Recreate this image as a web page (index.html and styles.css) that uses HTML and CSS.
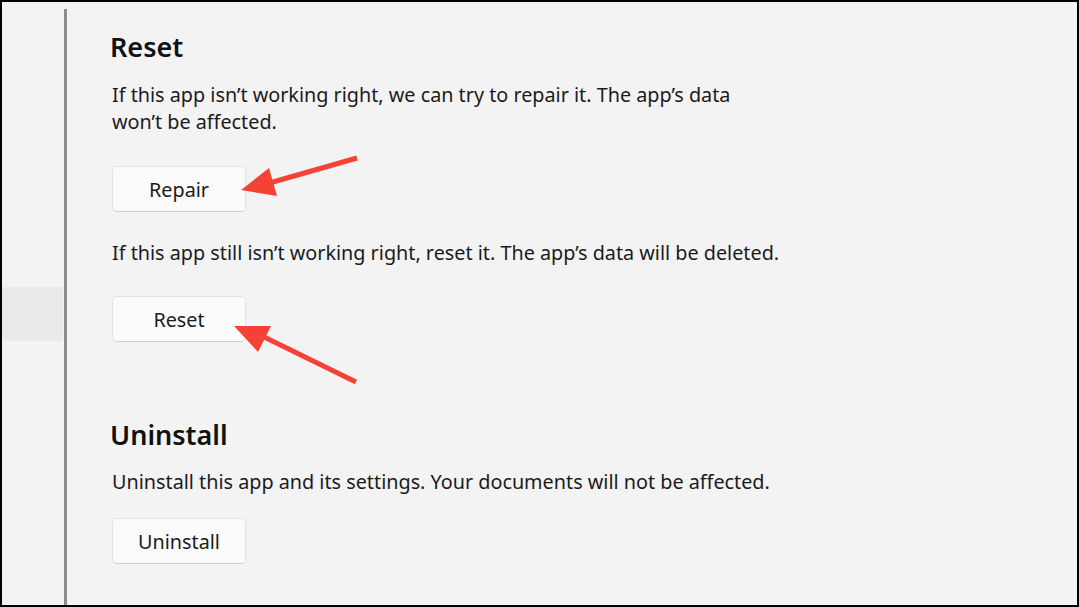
FILE: index.html
```html
<!DOCTYPE html>
<html>
<head>
<meta charset="utf-8">
<link rel="stylesheet" href="styles.css">
</head>
<body>
<div class="frame">
  <aside class="sidebar">
    <div class="nav-item"></div>
  </aside>
  <div class="divider"></div>
  <main class="content">
    <section class="group">
      <h2 class="title">Reset</h2>
      <p class="desc">If this app isn’t working right, we can try to repair it. The app’s data<br>won’t be affected.</p>
      <button class="btn btn-repair">Repair</button>
      <p class="desc desc-gap">If this app still isn’t working right, reset it. The app’s data will be deleted.</p>
      <button class="btn btn-reset">Reset</button>
    </section>
    <section class="group group-uninstall">
      <h2 class="title">Uninstall</h2>
      <p class="desc desc-uninstall">Uninstall this app and its settings. Your documents will not be affected.</p>
      <button class="btn btn-uninstall">Uninstall</button>
    </section>
  </main>
  <svg class="arrows" width="1079" height="607" viewBox="0 0 1079 607">
    <line x1="357" y1="158" x2="266" y2="184" stroke="#f44336" stroke-width="5" stroke-linecap="butt"/>
    <polygon points="241,190 269,168 277,196" fill="#f44336"/>
    <line x1="356" y1="382" x2="258" y2="334" stroke="#f44336" stroke-width="5" stroke-linecap="butt"/>
    <polygon points="234,326 271,326 258,352" fill="#f44336"/>
  </svg>
</div>
</body>
</html>
```
FILE: styles.css
```css
html, body {
  margin: 0;
  padding: 0;
  background: #000;
}
.frame {
  position: relative;
  box-sizing: border-box;
  width: 1079px;
  height: 607px;
  border: 2px solid #000;
  background: #f3f3f3;
  display: flex;
  overflow: hidden;
  font-family: "Noto Sans", "Open Sans", sans-serif;
  color: #1b1b1b;
}
.sidebar {
  width: 62px;
  flex: none;
  padding-top: 285px;
}
.nav-item {
  height: 54px;
  width: 61px;
  background: #eaeaea;
}
.divider {
  flex: none;
  width: 3px;
  margin-top: 7px;
  background: #8c8c8c;
}
.content {
  flex: 1;
  padding-left: 43px;
  padding-top: 27px;
}
.title {
  margin: 0;
  font-size: 27px;
  font-weight: 600;
  line-height: 36px;
  color: #111;
}
.desc {
  margin: 16px 0 0 2px;
  font-size: 19.8px;
  line-height: 27px;
}
.desc-gap {
  margin-top: 27px;
}
.desc-uninstall {
  margin-top: 15px;
}
.btn {
  display: block;
  box-sizing: border-box;
  width: 134px;
  height: 46px;
  margin: 0 0 0 2px;
  padding: 0;
  font-family: inherit;
  font-size: 19.8px;
  color: #1b1b1b;
  background: #fbfbfb;
  border: 1px solid #e3e3e3;
  border-bottom-color: #cfcfcf;
  border-radius: 5px;
}
.btn-repair {
  margin-top: 31px;
}
.btn-reset {
  margin-top: 30px;
}
.btn-uninstall {
  margin-top: 23px;
}
.group-uninstall {
  margin-top: 75px;
}
.arrows {
  position: absolute;
  left: -2px;
  top: -2px;
}
```
